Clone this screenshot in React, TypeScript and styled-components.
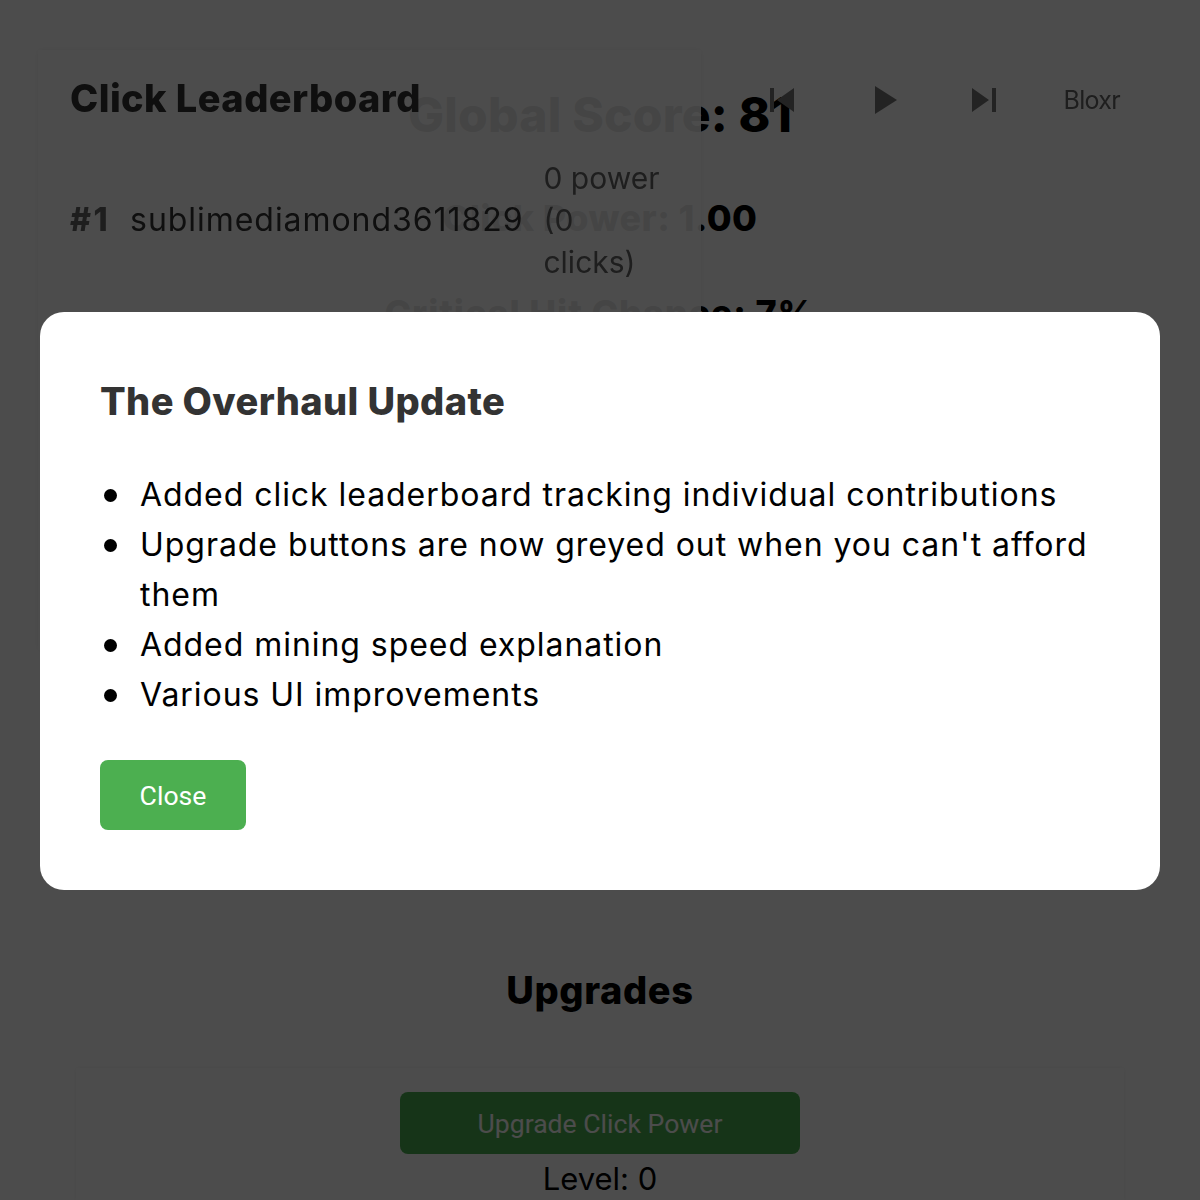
import React from "react";
import styled, { createGlobalStyle } from "styled-components";

const bodyFont = `"Inter", "Noto Sans", "Liberation Sans", sans-serif`;

const GlobalStyle = createGlobalStyle`
  html, body {
    margin: 0;
    height: 1200px;
    overflow: hidden;
    background: #fff;
    font-family: ${bodyFont};
  }
`;

const Game = styled.main`
  display: flex;
  flex-direction: column;
  align-items: center;
  padding-top: 80px;
  color: #000;
`;

const Score = styled.h1`
  margin: 0;
  font-size: 48px;
  line-height: 70px;
  font-weight: 800;
  letter-spacing: 0.2px;
`;

const Stat = styled.h2<{ $spacing: number }>`
  margin: 0;
  font-size: 36px;
  line-height: 50px;
  font-weight: 800;
  letter-spacing: ${(p) => p.$spacing}px;
`;

const StatList = styled.div`
  display: flex;
  flex-direction: column;
  align-items: center;
  gap: 45px;
  margin-top: 43px;
`;

const SectionTitle = styled.h2`
  margin: 625px 0 0;
  font-size: 38px;
  line-height: 54px;
  font-weight: 800;
  letter-spacing: 0.6px;
`;

const UpgradeCard = styled.section`
  align-self: stretch;
  margin: 51px 76px 0;
  padding-top: 24px;
  display: flex;
  flex-direction: column;
  align-items: center;
  box-shadow: 0 0 4px rgba(0, 0, 0, 0.06);
`;

const UpgradeButton = styled.button`
  width: 400px;
  height: 62px;
  border: none;
  border-radius: 8px;
  background: #4caf50;
  color: #fff;
  font-family: "Roboto", sans-serif;
  font-size: 26.6px;
`;

const Level = styled.p`
  margin: 2px 0 0;
  font-size: 31px;
  line-height: 46px;
`;

const Leaderboard = styled.aside`
  position: fixed;
  top: 50px;
  left: 38px;
  width: 663px;
  height: 600px;
  box-sizing: border-box;
  padding: 23px 32px;
  background: rgba(255, 255, 255, 0.9);
  box-shadow: 0 0 6px rgba(0, 0, 0, 0.06);
`;

const LeaderTitle = styled.h3`
  margin: 0;
  font-size: 38px;
  line-height: 50px;
  font-weight: 800;
  letter-spacing: 0.43px;
  color: #333;
`;

const LeaderRow = styled.div`
  display: flex;
  align-items: center;
  gap: 20px;
  margin-top: 34px;
  font-size: 32px;
  line-height: 42px;
  color: #333;
`;

const Rank = styled.span`
  font-weight: 800;
  letter-spacing: 2.5px;
  color: #666;
`;

const PlayerName = styled.span`
  letter-spacing: 0.95px;
`;

const Clicks = styled.span`
  width: 130px;
  color: #666;
  font-size: 30px;
`;

const Player = styled.nav`
  position: fixed;
  top: 76px;
  right: 80px;
  display: flex;
  align-items: center;
  color: #777;
`;

const PlayerIcon = styled.svg`
  display: block;
  width: 48px;
  height: 48px;
  margin-right: 53px;
  fill: currentColor;
`;

const TrackName = styled.span`
  margin-left: 3px;
  font-size: 25px;
  letter-spacing: -0.7px;
  color: #666;
`;

const Overlay = styled.div`
  position: fixed;
  inset: 0;
  display: flex;
  align-items: center;
  justify-content: center;
  background: rgba(0, 0, 0, 0.7);
`;

const Modal = styled.div`
  width: 1120px;
  box-sizing: border-box;
  padding: 60px;
  margin-top: 2px;
  background: #fff;
  border-radius: 24px;
`;

const ModalTitle = styled.h2`
  margin: 0;
  font-size: 38px;
  line-height: 58px;
  font-weight: 800;
  letter-spacing: 0.4px;
  color: #333;
`;

const Notes = styled.ul`
  margin: 40px 0;
  padding-left: 40px;
  list-style: none;
  font-size: 32px;
  line-height: 50px;
  letter-spacing: 0.95px;
  color: #000;
`;

const Note = styled.li`
  position: relative;

  &::before {
    content: "";
    position: absolute;
    left: -36.5px;
    top: 19px;
    width: 13px;
    height: 13px;
    border-radius: 50%;
    background: #000;
  }
`;

const CloseButton = styled.button`
  display: block;
  width: 146px;
  height: 70px;
  border: none;
  border-radius: 8px;
  background: #4caf50;
  color: #fff;
  font-family: "Roboto", sans-serif;
  font-size: 26.6px;
`;

const notes = [
  "Added click leaderboard tracking individual contributions",
  "Upgrade buttons are now greyed out when you can't afford them",
  "Added mining speed explanation",
  "Various UI improvements",
];

const App = () => {
  return (
    <>
      <GlobalStyle />
      <Game>
        <Score>Global Score: 81</Score>
        <StatList>
          <Stat $spacing={0.4}>Click Power: 1.00</Stat>
          <Stat $spacing={0.85}>Critical Hit Chance: 7%</Stat>
        </StatList>
        <SectionTitle>Upgrades</SectionTitle>
        <UpgradeCard>
          <UpgradeButton>Upgrade Click Power</UpgradeButton>
          <Level>Level: 0</Level>
        </UpgradeCard>
      </Game>

      <Leaderboard>
        <LeaderTitle>Click Leaderboard</LeaderTitle>
        <LeaderRow>
          <Rank>#1</Rank>
          <PlayerName>sublimediamond3611829</PlayerName>
          <Clicks>0 power (0 clicks)</Clicks>
        </LeaderRow>
      </Leaderboard>

      <Player>
        <PlayerIcon viewBox="0 0 24 24">
          <path d="M6 6h2v12H6zm3.5 6l8.5 6V6z" />
        </PlayerIcon>
        <PlayerIcon viewBox="0 0 24 24">
          <path d="M8 5v14l11-7z" />
        </PlayerIcon>
        <PlayerIcon viewBox="0 0 24 24">
          <path d="M6 18l8.5-6L6 6v12zM16 6v12h2V6h-2z" />
        </PlayerIcon>
        <TrackName>Bloxr</TrackName>
      </Player>

      <Overlay>
        <Modal>
          <ModalTitle>The Overhaul Update</ModalTitle>
          <Notes>
            {notes.map((note) => (
              <Note key={note}>{note}</Note>
            ))}
          </Notes>
          <CloseButton>Close</CloseButton>
        </Modal>
      </Overlay>
    </>
  );
};

export default App;
